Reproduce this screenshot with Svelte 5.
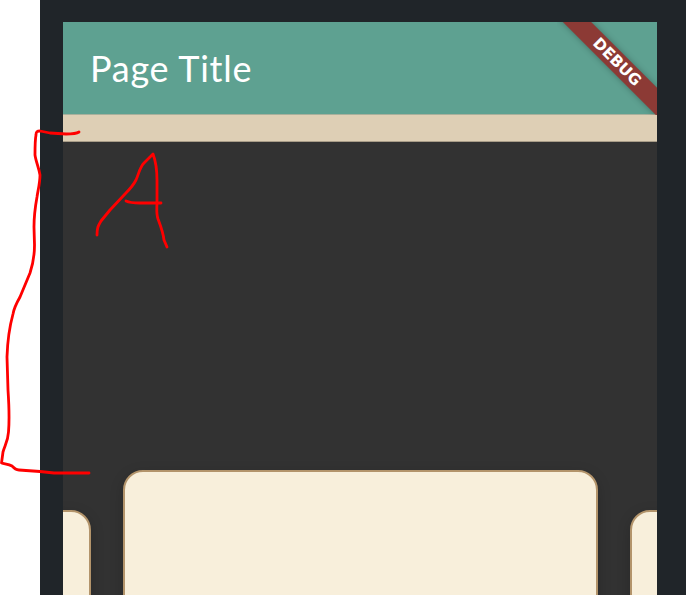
<script lang="ts">
  const bracket =
    'M79 132 C76 134 72 134 66 134 L50 133 L40 131 C37 131 36 132 36 135 C35 140 35 150 35 155 C36 162 39 168 40 175 C40 183 38 190 37 197 C35 208 34 218 34 227 L34.5 245 C34.5 258 33 264 30 273 L20 297 C16 304 14 308 13 314 C10 325 7.5 340 7 357 L8 390 C9 405 9.5 420 8.5 432 C8 441 5 445 3 452 L1.5 463 C5 464 9 464 12 466 C15 469 16 470 19 470 L40 471.5 L54 473 L89 473';
  const letter =
    'M97 235 C97 228 98 226 101 221 L110 210 L125 194 C130 189 133 186 136 180 C139 173 140 167 144 163 L153 154 C156 162 157 170 157 180 L157 200 C157 210 156 213 158 219 C161 227 163 232 164 240 L167 247';
  const crossbar = 'M126 201 C130 203 134 203 140 203 L161 203';
</script>

<div class="screen">
  <div class="gutter"></div>
  <div class="frame">
    <div class="phone">
      <header class="app-bar">
        <h1>Page Title</h1>
      </header>
      <div class="strip"></div>
      <div class="pager">
        <div class="page side"><div class="card"></div></div>
        <div class="page"><div class="card"></div></div>
        <div class="page side"><div class="card"></div></div>
      </div>
      <div class="banner-clip">
        <div class="banner">DEBUG</div>
      </div>
    </div>
  </div>

  <svg class="scribble" width="686" height="595" viewBox="0 0 686 595" fill="none" aria-hidden="true">
    <path d={bracket} />
    <path d={letter} />
    <path d={crossbar} />
  </svg>
</div>

<style>
  :global(body) {
    margin: 0;
    background: #fff;
  }
  .screen {
    position: relative;
    display: flex;
    width: 686px;
    height: 595px;
    overflow: hidden;
    background: #fff;
  }
  .gutter {
    width: 40px;
    flex-shrink: 0;
  }
  .frame {
    flex: 1;
    min-width: 0;
    display: flex;
    padding: 22px 29px 0 23px;
    background: #202529;
  }
  .phone {
    position: relative;
    flex: 1;
    min-width: 0;
    display: flex;
    flex-direction: column;
    overflow: hidden;
    background: #323232;
  }
  .app-bar {
    flex-shrink: 0;
    box-sizing: border-box;
    height: 93px;
    display: flex;
    align-items: center;
    padding: 0 27px;
    background: #5ea191;
    border-bottom: 1px solid #a8b09c;
  }
  .app-bar h1 {
    margin: 0;
    font-family: "Lato", "Open Sans", sans-serif;
    font-size: 36px;
    font-weight: 400;
    letter-spacing: 0.75px;
    color: #fff;
  }
  .strip {
    flex-shrink: 0;
    box-sizing: border-box;
    height: 27px;
    background: #decfb5;
    border-bottom: 1px solid #a89c88;
  }
  .pager {
    flex: 1;
    min-height: 0;
    display: flex;
    justify-content: center;
    padding-top: 328px;
  }
  .page {
    box-sizing: border-box;
    width: 507px;
    flex-shrink: 0;
    padding: 0 16px;
  }
  .page.side {
    padding-top: 40px;
  }
  .card {
    box-sizing: border-box;
    height: 400px;
    background: #f8efdb;
    border: 2px solid #b3946b;
    border-radius: 20px;
    box-shadow: 0 4px 14px rgba(0, 0, 0, 0.18);
  }
  .banner-clip {
    position: absolute;
    top: 0;
    right: 0;
    width: 100px;
    height: 93px;
    overflow: hidden;
  }
  .banner {
    position: absolute;
    left: -20px;
    top: 29.5px;
    width: 160px;
    height: 20px;
    line-height: 20px;
    text-align: center;
    transform: rotate(45deg);
    background: #8c3a35;
    box-shadow: 0 0 6px rgba(0, 0, 0, 0.3);
    color: #fff;
    font-family: "DejaVu Sans", sans-serif;
    font-size: 15.5px;
    font-weight: 700;
  }
  .scribble {
    position: absolute;
    inset: 0;
    pointer-events: none;
  }
  .scribble path {
    stroke: #ff0000;
    stroke-width: 2.8;
    stroke-linecap: round;
    stroke-linejoin: round;
  }
</style>
